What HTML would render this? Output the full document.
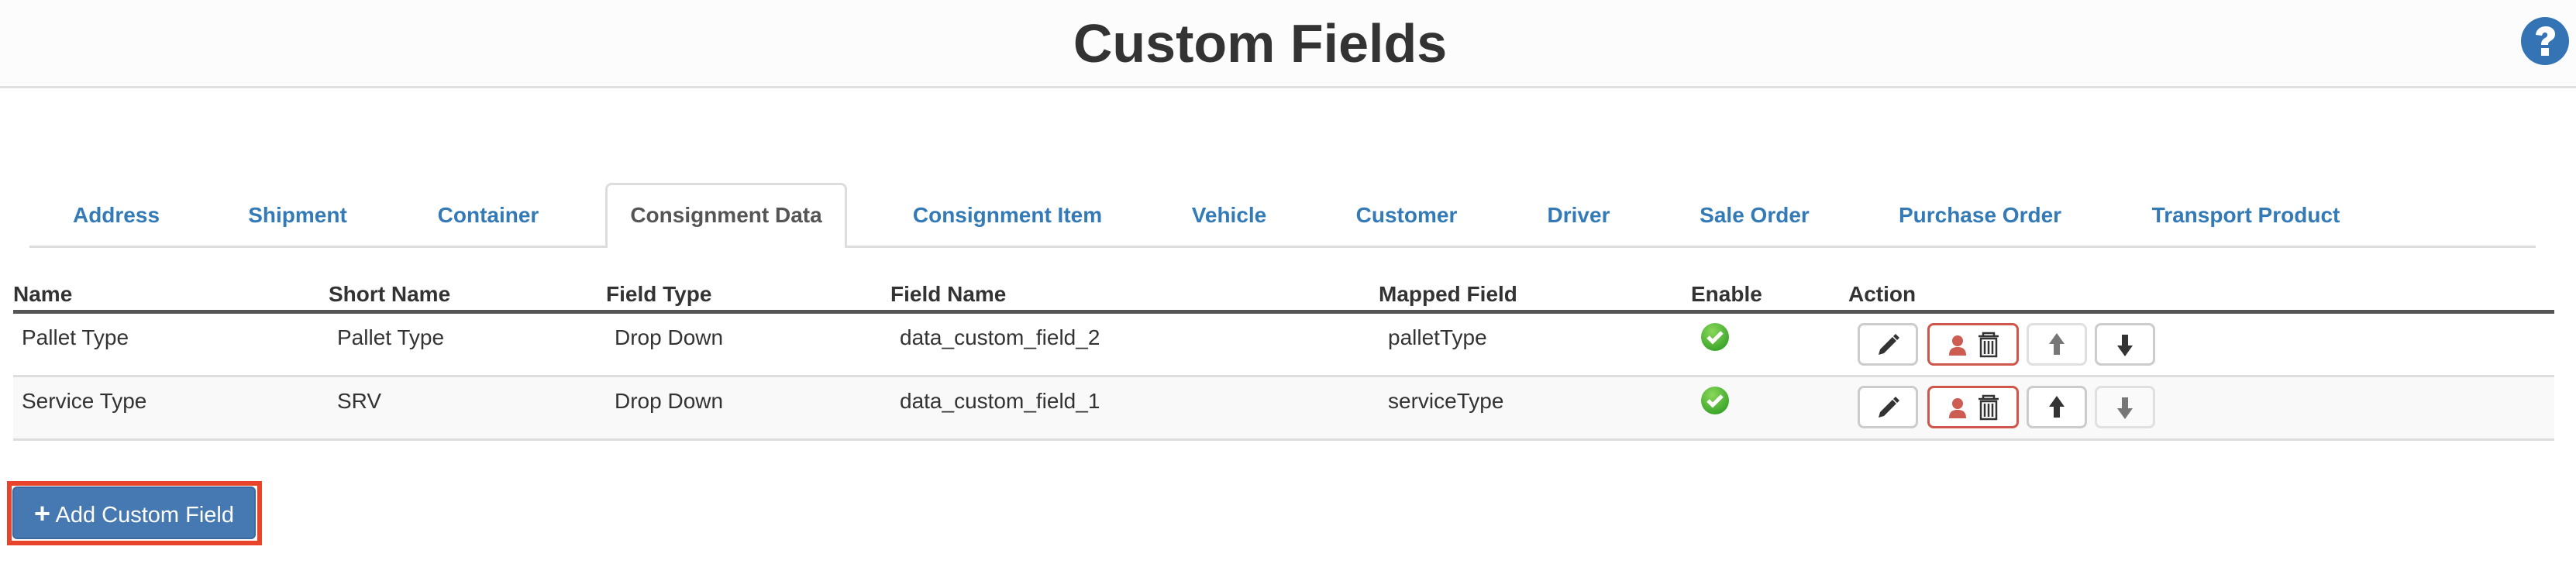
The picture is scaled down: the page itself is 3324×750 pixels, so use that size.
<!DOCTYPE html>
<html><head><meta charset="utf-8"><style>
*{margin:0;padding:0;box-sizing:border-box}
body{width:3324px;height:750px;background:#fff;font-family:"Liberation Sans",Arial,sans-serif;position:relative;overflow:hidden;color:#333}
.hdr{position:absolute;left:0;top:0;width:3324px;height:114px;background:#fcfcfc;border-bottom:3px solid #e0e0e0}
.title{position:absolute;left:-36px;width:3324px;top:14px;text-align:center;font-size:70px;font-weight:bold;color:#333;line-height:84px}
.abs{position:absolute;white-space:nowrap}
.tab{position:absolute;top:262px;font-size:28px;font-weight:bold;color:#337ab7;transform:translateX(-50%);line-height:32px}
.tabline{position:absolute;left:38px;top:317px;width:3234px;height:3px;background:#ddd}
.active{position:absolute;left:781px;top:236px;width:312px;height:84px;background:#fff;border:3px solid #ddd;border-bottom:none;border-radius:8px 8px 0 0}
.th{position:absolute;top:364px;font-size:28px;font-weight:bold;line-height:32px;color:#333}
.td{position:absolute;font-size:28px;line-height:32px;color:#333}
.btn{position:absolute;border:3px solid #ccc;border-radius:8px;background:#fff;height:55px;display:flex;align-items:center;justify-content:center}
</style></head><body>
<div class="hdr"></div>
<div class="title">Custom Fields</div>
<svg class="abs" style="left:3252px;top:21px" width="64" height="64" viewBox="0 0 64 64"><circle cx="32" cy="32" r="31" fill="#3474b4"/><path d="M20 24c1-8 7-11 13-11 7 0 12 4 12 10 0 5-3 7-6 9-2 1-3 2-3 5h-9c0-5 2-7 5-9 2-1 3-2 3-4s-1-3-3-3-3 1-4 4z" fill="#fff"/><rect x="27" y="41" width="10" height="10" fill="#fff"/></svg>

<div class="tabline"></div>
<div class="active"></div>
<span class="tab" style="left:150px">Address</span>
<span class="tab" style="left:384px">Shipment</span>
<span class="tab" style="left:630px">Container</span>
<span class="tab" style="left:937px;color:#555">Consignment Data</span>
<span class="tab" style="left:1300px">Consignment Item</span>
<span class="tab" style="left:1586px">Vehicle</span>
<span class="tab" style="left:1815px">Customer</span>
<span class="tab" style="left:2037px">Driver</span>
<span class="tab" style="left:2264px">Sale Order</span>
<span class="tab" style="left:2555px">Purchase Order</span>
<span class="tab" style="left:2898px">Transport Product</span>

<span class="th" style="left:17px">Name</span>
<span class="th" style="left:424px">Short Name</span>
<span class="th" style="left:782px">Field Type</span>
<span class="th" style="left:1149px">Field Name</span>
<span class="th" style="left:1779px">Mapped Field</span>
<span class="th" style="left:2182px">Enable</span>
<span class="th" style="left:2385px">Action</span>
<div class="abs" style="left:17px;top:400px;width:3279px;height:5px;background:#555"></div>
<div class="abs" style="left:17px;top:484px;width:3279px;height:3px;background:#ddd"></div>
<div class="abs" style="left:17px;top:487px;width:3279px;height:79px;background:#f9f9f9"></div>
<div class="abs" style="left:17px;top:566px;width:3279px;height:3px;background:#ddd"></div>

<span class="td" style="left:28px;top:420px">Pallet Type</span>
<span class="td" style="left:435px;top:420px">Pallet Type</span>
<span class="td" style="left:793px;top:420px">Drop Down</span>
<span class="td" style="left:1161px;top:420px">data_custom_field_2</span>
<span class="td" style="left:1791px;top:420px">palletType</span>
<span class="td" style="left:28px;top:502px">Service Type</span>
<span class="td" style="left:435px;top:502px">SRV</span>
<span class="td" style="left:793px;top:502px">Drop Down</span>
<span class="td" style="left:1161px;top:502px">data_custom_field_1</span>
<span class="td" style="left:1791px;top:502px">serviceType</span>

<svg class="abs" style="left:2194px;top:416px" width="38" height="38" viewBox="0 0 38 38"><defs><radialGradient id="g" cx="40%" cy="30%" r="70%"><stop offset="0" stop-color="#8ad85a"/><stop offset="1" stop-color="#3aa52a"/></radialGradient></defs><circle cx="19" cy="19" r="18" fill="url(#g)"/><path d="M10 19l6 6 12-12" stroke="#fff" stroke-width="5" fill="none"/></svg>
<svg class="abs" style="left:2194px;top:498px" width="38" height="38" viewBox="0 0 38 38"><circle cx="19" cy="19" r="18" fill="url(#g)"/><path d="M10 19l6 6 12-12" stroke="#fff" stroke-width="5" fill="none"/></svg>

<div class="btn" style="left:2397px;top:417px;width:78px"><svg width="30" height="30" viewBox="0 0 30 30"><path d="M3 28l2-7L21 5l5 5L10 26z M22 4l3-3 5 5-3 3z" fill="#333"/></svg></div>
<div class="btn" style="left:2487px;top:417px;width:118px;border-color:#d0564c"><svg width="80" height="34" viewBox="0 0 80 34"><circle cx="20" cy="12" r="7" fill="#cd5c52"/><path d="M9 31c0-8 4-11 11-11s11 3 11 11z" fill="#cd5c52"/><path d="M47 6h26M53 6V2h14v4M50 9h20v23H50z" stroke="#333" stroke-width="2.5" fill="none"/><path d="M55 12v17M60 12v17M65 12v17" stroke="#333" stroke-width="2.5"/></svg></div>
<div class="btn" style="left:2615px;top:417px;width:78px;border-color:#e0e0e0"><svg width="24" height="32" viewBox="0 0 24 32"><path d="M12 1L2 15h6v14h8V15h6z" fill="#777"/></svg></div>
<div class="btn" style="left:2703px;top:417px;width:78px"><svg width="24" height="32" viewBox="0 0 24 32"><path d="M12 31L2 17h6V3h8v14h6z" fill="#333"/></svg></div>

<div class="btn" style="left:2397px;top:498px;width:78px"><svg width="30" height="30" viewBox="0 0 30 30"><path d="M3 28l2-7L21 5l5 5L10 26z M22 4l3-3 5 5-3 3z" fill="#333"/></svg></div>
<div class="btn" style="left:2487px;top:498px;width:118px;border-color:#d0564c"><svg width="80" height="34" viewBox="0 0 80 34"><circle cx="20" cy="12" r="7" fill="#cd5c52"/><path d="M9 31c0-8 4-11 11-11s11 3 11 11z" fill="#cd5c52"/><path d="M47 6h26M53 6V2h14v4M50 9h20v23H50z" stroke="#333" stroke-width="2.5" fill="none"/><path d="M55 12v17M60 12v17M65 12v17" stroke="#333" stroke-width="2.5"/></svg></div>
<div class="btn" style="left:2615px;top:498px;width:78px"><svg width="24" height="32" viewBox="0 0 24 32"><path d="M12 1L2 15h6v14h8V15h6z" fill="#333"/></svg></div>
<div class="btn" style="left:2703px;top:498px;width:78px;border-color:#e0e0e0;background:#fafafa"><svg width="24" height="32" viewBox="0 0 24 32"><path d="M12 31L2 17h6V3h8v14h6z" fill="#777"/></svg></div>

<div class="abs" style="left:9px;top:621px;width:329px;height:83px;border:6px solid #e8432b"></div>
<div class="abs" style="left:16px;top:628px;width:314px;height:68px;background:#4679b1;border:2px solid #3b6aa0;border-radius:6px;color:#fff;font-size:29px;line-height:64px;padding-left:26px"><span style="font-weight:bold;font-size:36px;position:relative;top:1px">+</span> Add Custom Field</div>
</body></html>
